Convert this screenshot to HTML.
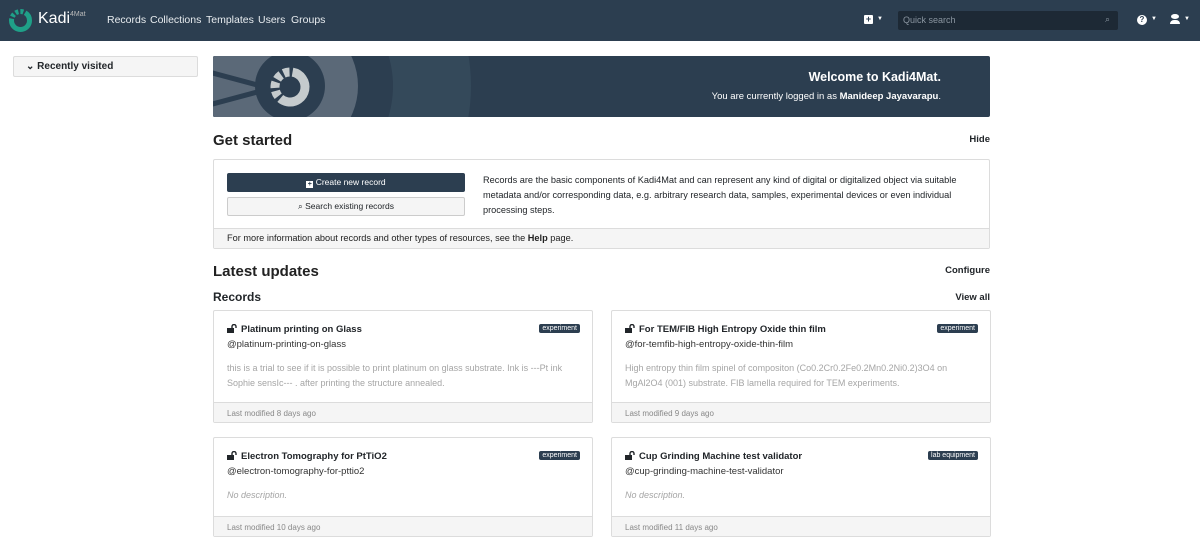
<!DOCTYPE html>
<html><head><meta charset="utf-8"><style>
*{box-sizing:border-box;margin:0;padding:0}
body{width:1200px;height:544px;overflow:hidden;background:#fff;font-family:"Liberation Sans",sans-serif;color:#212529;font-size:10px;position:relative}
.nav{position:absolute;left:0;top:0;width:1200px;height:41px;background:#2c3e50;color:#fff}
.abs{position:absolute}
.nav .l{position:absolute;top:14px;font-size:10.5px;color:#e8ecef}
.card{position:absolute;border:1px solid #dcdcdc;border-radius:2px;background:#fff}
.foot{position:absolute;left:0;right:0;bottom:0;height:20px;background:#f5f5f5;border-top:1px solid #dcdcdc;color:#888;font-size:8px;padding:6px 13px}
.t{position:absolute;left:13px;top:13px;font-weight:bold;font-size:9.5px}
.s{position:absolute;left:13px;top:28px;font-size:9.5px;color:#333}
.d{position:absolute;left:13px;top:50px;font-size:9px;color:#a5a5a5;line-height:14.5px;right:13px}
.b{position:absolute;right:12px;top:13px;background:#2c3e50;color:#fff;font-size:7px;padding:1px 3px;border-radius:2px}
.lk{display:inline-block;width:10px;height:9px;margin-right:4px;vertical-align:-1px}
h2{position:absolute;font-size:15px;font-weight:bold;color:#222}
.r{position:absolute;right:210px;font-weight:bold;font-size:9.5px}
</style></head><body>
<div class="nav">
<svg class="abs" style="left:8px;top:8px" width="25" height="25" viewBox="0 0 25 25"><circle cx="12.5" cy="12.5" r="9" fill="none" stroke="#1fa088" stroke-width="5" stroke-dasharray="30 2 3 2 3 2 3 2"/></svg>
<div class="abs" style="left:38px;top:10px;font-size:16px;color:#fff">Kadi<sup style="font-size:7px;color:#bbb;vertical-align:7px">4Mat</sup></div>
<span class="l" style="left:107px">Records</span><span class="l" style="left:150px">Collections</span><span class="l" style="left:206px">Templates</span><span class="l" style="left:258px">Users</span><span class="l" style="left:291px">Groups</span>
<div class="abs" style="left:864px;top:15px;width:9px;height:9px;background:#fff;border-radius:1px;color:#2c3e50;font-size:9px;line-height:9px;text-align:center;font-weight:bold">+</div>
<div class="abs" style="left:877px;top:16px;color:#fff;font-size:6px">▼</div>
<div class="abs" style="left:898px;top:11px;width:220px;height:19px;background:#1d2935;border-radius:2px;color:#8a95a0;font-size:9px;padding:4px 5px">Quick search<span style="position:absolute;right:8px;top:3px">⌕</span></div>
<div class="abs" style="left:1137px;top:15px;width:10px;height:10px;background:#fff;border-radius:50%;color:#2c3e50;font-size:8px;text-align:center;line-height:10px;font-weight:bold">?</div>
<div class="abs" style="left:1151px;top:16px;color:#fff;font-size:6px">▼</div>
<div class="abs" style="left:1171px;top:14px;width:8px;height:5px;background:#fff;border-radius:50%"></div>
<div class="abs" style="left:1170px;top:20px;width:10px;height:4px;background:#fff;border-radius:4px 4px 0 0"></div>
<div class="abs" style="left:1184px;top:16px;color:#fff;font-size:6px">▼</div>
</div>
<div class="abs" style="left:13px;top:56px;width:185px;height:21px;background:#f5f5f5;border:1px solid #dcdcdc;border-radius:2px;font-size:10px;font-weight:bold;padding:4px 12px">⌄ Recently visited</div>
<div class="abs" style="left:213px;top:56px;width:777px;height:61px;background:#2c3e50;border-radius:2px;overflow:hidden">
<div class="abs" style="left:-108px;top:-153px;width:366px;height:366px;border-radius:50%;background:#34495a"></div>
<div class="abs" style="left:-30px;top:-75px;width:210px;height:210px;border-radius:50%;background:#2c3e50"></div>
<div class="abs" style="left:5px;top:-40px;width:140px;height:140px;border-radius:50%;background:#5b6978"></div>
<div class="abs" style="left:-30px;top:-20px;width:60px;height:100px;background:#5b6978"></div>
<div class="abs" style="left:-10px;top:20px;width:60px;height:5px;background:#2c3e50;transform:rotate(15deg)"></div>
<div class="abs" style="left:-10px;top:40px;width:60px;height:5px;background:#2c3e50;transform:rotate(-15deg)"></div>
<div class="abs" style="left:42px;top:-5px;width:70px;height:70px;border-radius:50%;background:#2c3e50"></div>
<svg class="abs" style="left:55px;top:9px" width="44" height="44" viewBox="0 0 44 44"><circle cx="22" cy="22" r="15" fill="none" stroke="#c5cbcd" stroke-width="9" stroke-dasharray="55 3 6 3 6 3 6 3 6 3" transform="rotate(-80 22 22)"/></svg>
<div class="abs" style="right:49px;top:14px;color:#fff;font-size:12.5px;font-weight:bold">Welcome to Kadi4Mat.</div>
<div class="abs" style="right:49px;top:35px;color:#fff;font-size:9.5px">You are currently logged in as <b>Manideep Jayavarapu</b>.</div>
</div>
<h2 style="left:213px;top:132px">Get started</h2>
<div class="r" style="top:134px">Hide</div>
<div class="card" style="left:213px;top:159px;width:777px;height:90px">
<div class="abs" style="left:13px;top:13px;width:238px;height:19px;background:#2c3e50;color:#fff;font-size:8.5px;text-align:center;padding-top:4px;border-radius:2px"><span style="display:inline-block;width:7px;height:7px;background:#fff;color:#2c3e50;font-size:7px;line-height:7px;font-weight:bold;vertical-align:-1px">+</span> Create new record</div>
<div class="abs" style="left:13px;top:37px;width:238px;height:19px;background:#f5f5f5;border:1px solid #ccc;font-size:8.5px;text-align:center;padding-top:3px;border-radius:2px">⌕ Search existing records</div>
<div class="abs" style="left:269px;top:13px;width:495px;font-size:9.2px;line-height:15px">Records are the basic components of Kadi4Mat and can represent any kind of digital or digitalized object via suitable metadata and/or corresponding data, e.g. arbitrary research data, samples, experimental devices or even individual processing steps.</div>
<div class="foot" style="color:#222;font-size:9.2px;padding:4px 13px">For more information about records and other types of resources, see the <b>Help</b> page.</div>
</div>
<h2 style="left:213px;top:263px">Latest updates</h2>
<div class="r" style="top:265px">Configure</div>
<div class="abs" style="left:213px;top:290px;font-size:12px;font-weight:bold">Records</div>
<div class="r" style="top:292px">View all</div>
<svg width="0" height="0" style="position:absolute"><defs><symbol id="lk" viewBox="0 0 10 9"><rect x="0" y="4" width="7" height="5" fill="#212529"/><path d="M5 4.5V2.5a2 2 0 0 1 4 0V4" fill="none" stroke="#212529" stroke-width="1.4"/></symbol></defs></svg>
<div class="card" style="left:213px;top:310px;width:380px;height:113px"><div class="t"><svg class="lk"><use href="#lk"/></svg>Platinum printing on Glass</div><div class="b">experiment</div><div class="s">@platinum-printing-on-glass</div><div class="d">this is a trial to see if it is possible to print platinum on glass substrate. Ink is ---Pt ink Sophie sensIc--- . after printing the structure annealed.</div><div class="foot">Last modified 8 days ago</div></div>
<div class="card" style="left:611px;top:310px;width:380px;height:113px"><div class="t"><svg class="lk"><use href="#lk"/></svg>For TEM/FIB High Entropy Oxide thin film</div><div class="b">experiment</div><div class="s">@for-temfib-high-entropy-oxide-thin-film</div><div class="d">High entropy thin film spinel of compositon (Co0.2Cr0.2Fe0.2Mn0.2Ni0.2)3O4 on MgAl2O4 (001) substrate. FIB lamella required for TEM experiments.</div><div class="foot">Last modified 9 days ago</div></div>
<div class="card" style="left:213px;top:437px;width:380px;height:100px"><div class="t"><svg class="lk"><use href="#lk"/></svg>Electron Tomography for PtTiO2</div><div class="b">experiment</div><div class="s">@electron-tomography-for-pttio2</div><div class="d" style="font-style:italic">No description.</div><div class="foot">Last modified 10 days ago</div></div>
<div class="card" style="left:611px;top:437px;width:380px;height:100px"><div class="t"><svg class="lk"><use href="#lk"/></svg>Cup Grinding Machine test validator</div><div class="b">lab equipment</div><div class="s">@cup-grinding-machine-test-validator</div><div class="d" style="font-style:italic">No description.</div><div class="foot">Last modified 11 days ago</div></div>
</body></html>
